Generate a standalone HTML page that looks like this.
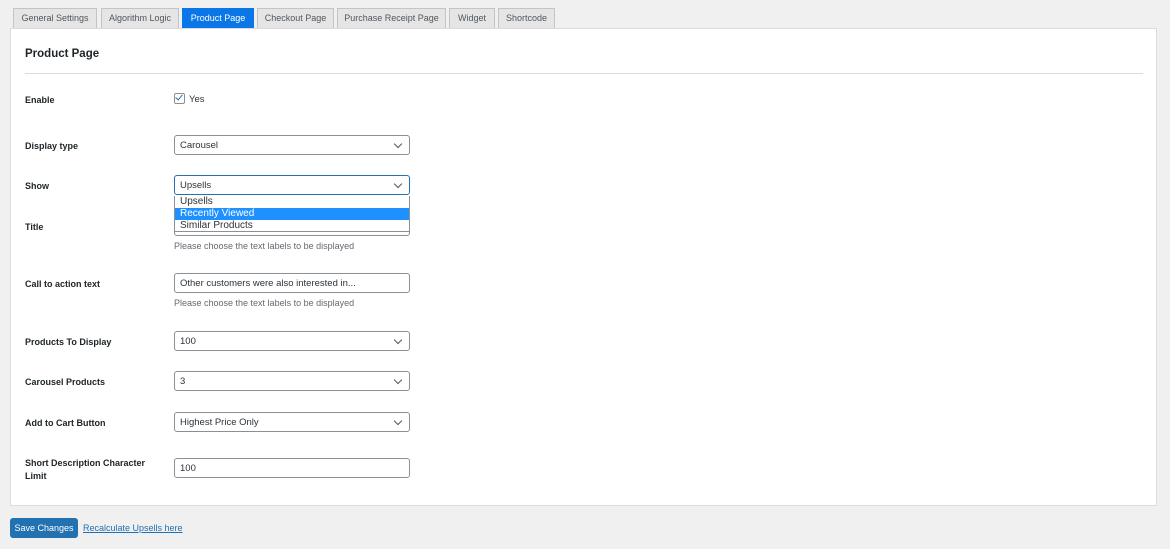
<!DOCTYPE html>
<html><head><style>
body{margin:0;width:1170px;height:549px;background:#f0f0f1;font-family:"Liberation Sans",Arial,sans-serif;position:relative;overflow:hidden;color:#1d2327}
.a{position:absolute}
.tab{position:absolute;top:8px;height:20px;box-sizing:border-box;border:1px solid #c3c4c7;border-bottom:none;background:#e5e5e5;font-size:9px;color:#50575e;text-align:center;line-height:19px}
.tab.on{background:#0a76e8;color:#fff;border-color:#0a76e8}
.lbl{position:absolute;left:25px;font-size:9px;font-weight:bold;color:#1d2327}
.in{position:absolute;left:174px;width:236px;height:20px;box-sizing:border-box;border:1px solid #8c8f94;border-radius:3px;background:#fff;font-size:9.5px;color:#2c3338;line-height:20px;padding-left:5px}
.sel::after{content:"";position:absolute;right:8px;top:5px;width:5px;height:5px;border-right:1.3px solid #50575e;border-bottom:1.3px solid #50575e;transform:rotate(45deg)}
.help{position:absolute;left:174px;font-size:9px;color:#646970}
</style></head><body>
<div class="tab" style="left:13px;width:84px">General Settings</div>
<div class="tab" style="left:101px;width:78px">Algorithm Logic</div>
<div class="tab on" style="left:182px;width:72px">Product Page</div>
<div class="tab" style="left:257px;width:77px">Checkout Page</div>
<div class="tab" style="left:337px;width:109px">Purchase Receipt Page</div>
<div class="tab" style="left:449px;width:46px">Widget</div>
<div class="tab" style="left:498px;width:57px">Shortcode</div>
<div class="a" style="left:10px;top:28px;width:1147px;height:478px;background:#fff;border:1px solid #dcdcde;box-sizing:border-box"></div>
<div class="a" style="left:25px;top:48px;font-size:11.5px;font-weight:bold">Product Page</div>
<div class="a" style="left:25px;top:73px;width:1118px;height:1px;background:#dcdcde"></div>
<div class="lbl" style="top:95px">Enable</div>
<div class="a" style="left:174px;top:93px;width:9px;height:9px;border:1px solid #8c8f94;border-radius:2px;background:#fff"></div>
<div class="a" style="left:177px;top:93px;width:3px;height:6px;border-right:1.5px solid #2271b1;border-bottom:1.5px solid #2271b1;transform:rotate(40deg)"></div>
<div class="a" style="left:189px;top:94px;font-size:9.5px;color:#2c3338">Yes</div>
<div class="lbl" style="top:141px">Display type</div>
<div class="in sel" style="top:135px">Carousel</div>
<div class="lbl" style="top:181px">Show</div>
<div class="in sel" style="top:175px;border-color:#2271b1">Upsells</div>
<div class="lbl" style="top:222px">Title</div>
<div class="in" style="top:216px"></div>
<div class="a" style="left:174px;top:196px;width:236px;height:36px;box-sizing:border-box;border:1px solid #8c8f94;border-top:none;background:#fff;font-size:10px;line-height:12px;color:#2c3338">
<div style="padding-left:5px">Upsells</div>
<div style="padding-left:5px;background:#1e90ff;color:#fff">Recently Viewed</div>
<div style="padding-left:5px">Similar Products</div></div>
<div class="help" style="top:241px">Please choose the text labels to be displayed</div>
<div class="lbl" style="top:279px">Call to action text</div>
<div class="in" style="top:273px">Other customers were also interested in...</div>
<div class="help" style="top:298px">Please choose the text labels to be displayed</div>
<div class="lbl" style="top:337px">Products To Display</div>
<div class="in sel" style="top:331px">100</div>
<div class="lbl" style="top:377px">Carousel Products</div>
<div class="in sel" style="top:371px">3</div>
<div class="lbl" style="top:418px">Add to Cart Button</div>
<div class="in sel" style="top:412px">Highest Price Only</div>
<div class="lbl" style="top:457px;line-height:13px">Short Description Character<br>Limit</div>
<div class="in" style="top:458px">100</div>
<div class="a" style="left:10px;top:518px;width:68px;height:20px;background:#2271b1;border-radius:3px;color:#fff;font-size:9px;text-align:center;line-height:20px">Save Changes</div>
<div class="a" style="left:83px;top:523px;font-size:9px;color:#2271b1;text-decoration:underline">Recalculate Upsells here</div>
</body></html>
